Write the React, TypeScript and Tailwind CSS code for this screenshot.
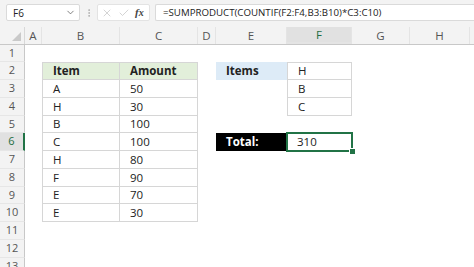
import React from 'react';
import { ChevronDown, X, Check, EllipsisVertical } from 'lucide-react';

const colW = ['w-[17px]', 'w-[78px]', 'w-[78px]', 'w-[18px]', 'w-[71px]', 'w-[65px]', 'w-[58px]', 'w-[60px]', 'flex-1'];
const colL = ['A', 'B', 'C', 'D', 'E', 'F', 'G', 'H', ''];
const rowH = ['h-[17px]', 'h-[18px]', 'h-[18px]', 'h-[18px]', 'h-[17px]', 'h-[18px]', 'h-[18px]', 'h-[18px]', 'h-[17px]', 'h-[18px]', 'h-[18px]', 'h-[18px]', 'h-[18px]'];

const data: [string, string][] = [
  ['A', '50'],
  ['H', '30'],
  ['B', '100'],
  ['C', '100'],
  ['H', '80'],
  ['F', '90'],
  ['E', '70'],
  ['E', '30'],
];

type Cell = { text?: string; cls?: string; sel?: boolean };

function getCell(r: number, c: number): Cell {
  const bd = 'border-[#d6d6d6]';
  if (r >= 2 && r <= 10 && (c === 1 || c === 2)) {
    let cls = `${bd} border-b border-r`;
    if (c === 1) cls += ' border-l';
    if (r === 2) cls += ' border-t bg-[#e2efda] font-bold';
    const text = r === 2 ? (c === 1 ? 'Item' : 'Amount') : data[r - 3][c - 1];
    return { text, cls };
  }
  if (c === 4 && r === 2) return { text: 'Items', cls: 'bg-[#ddebf7] font-bold' };
  if (c === 5 && r >= 2 && r <= 4) {
    let cls = `${bd} border-b border-r border-l`;
    if (r === 2) cls += ' border-t';
    return { text: ['H', 'B', 'C'][r - 2], cls };
  }
  if (c === 4 && r === 6) return { text: 'Total:', cls: 'bg-black text-white font-bold' };
  if (c === 5 && r === 6) return { text: '310', sel: true };
  return {};
}

export default function App() {
  const rows = Array.from({ length: 13 }, (_, i) => i + 1);
  return (
    <div
      className="w-[474px] h-[267px] overflow-hidden bg-white text-[#222]"
      style={{ fontFamily: '"Open Sans", "Liberation Sans", sans-serif' }}
    >
      {/* formula bar */}
      <div className="h-[27px] bg-[#f3f3f3] flex items-start pt-[4px] pl-[6px]">
        <div className="w-[74px] shrink-0 h-[17px] bg-white border border-[#dadada] rounded-[2px] flex items-center justify-between pl-[6px] pr-[3px]">
          <span className="text-[10px] leading-none">F6</span>
          <ChevronDown size={11} strokeWidth={1.6} color="#555" />
        </div>
        <div className="w-[17px] shrink-0 h-[17px] flex items-center justify-center">
          <EllipsisVertical size={10} strokeWidth={2} color="#aaa" />
        </div>
        <div className="w-[53px] shrink-0 h-[17px] bg-white border border-[#e3e3e3] rounded-[2px] flex items-center pl-[3px] gap-[5px]">
          <X size={12} strokeWidth={1.3} color="#bdbdbd" />
          <Check size={12} strokeWidth={1.3} color="#bdbdbd" />
          <span
            className="text-[11px] italic font-bold text-[#444] leading-none"
            style={{ fontFamily: '"Liberation Serif", serif' }}
          >
            f<span className="text-[10px]">x</span>
          </span>
        </div>
        <div className="ml-[5px] flex-1 h-[17px] bg-white border border-[#dadada] border-r-0 rounded-l-[2px] flex items-center pl-[7px]">
          <span className="text-[9.7px] leading-none whitespace-nowrap">=SUMPRODUCT(COUNTIF(F2:F4,B3:B10)*C3:C10)</span>
        </div>
      </div>

      {/* column headers */}
      <div className="flex h-[18px] bg-[#f3f3f3] border-b border-[#c8c8c8]">
        <div className="w-[25px] shrink-0 h-full relative border-r border-[#d8d8d8]">
          <div
            className="absolute right-[3px] bottom-[3px] w-[9px] h-[9px] bg-[#c9c9c9]"
            style={{ clipPath: 'polygon(100% 0, 100% 100%, 0 100%)' }}
          />
        </div>
        {colW.map((w, i) => (
          <div
            key={i}
            className={`${w} shrink-0 h-full flex items-center justify-center text-[11.5px] ${
              i === 5
                ? 'bg-[#e1e1e1] text-[#1e6e42] border-b-2 border-[#217346]'
                : 'text-[#555]'
            } ${i < 8 ? 'border-r border-[#e4e4e4]' : ''}`}
          >
            {colL[i]}
          </div>
        ))}
      </div>

      {/* rows */}
      {rows.map((r, ri) => (
        <div key={r} className={`flex ${rowH[ri]}`}>
          <div
            className={`w-[25px] shrink-0 h-full flex items-center justify-center text-[11px] border-b border-[#e6e6e6] ${
              r === 6
                ? 'bg-[#e1e1e1] text-[#1e6e42] border-r-2 border-r-[#217346]'
                : 'bg-[#f3f3f3] text-[#555] border-r border-r-[#c8c8c8]'
            }`}
          >
            {r}
          </div>
          {colW.map((w, c) => {
            const cell = getCell(r, c);
            return (
              <div
                key={c}
                className={`${w} shrink-0 h-full relative flex items-center pl-[10px] text-[11.5px] whitespace-nowrap ${cell.cls ?? ''}`}
              >
                {cell.text}
                {cell.sel && (
                  <>
                    <div className="absolute -left-[1px] -top-[1px] -right-[1px] -bottom-[1px] border-2 border-[#217346]" />
                    <div className="absolute -right-[3px] -bottom-[3px] w-[5px] h-[5px] bg-[#217346] outline outline-1 outline-white" />
                  </>
                )}
              </div>
            );
          })}
        </div>
      ))}
    </div>
  );
}
